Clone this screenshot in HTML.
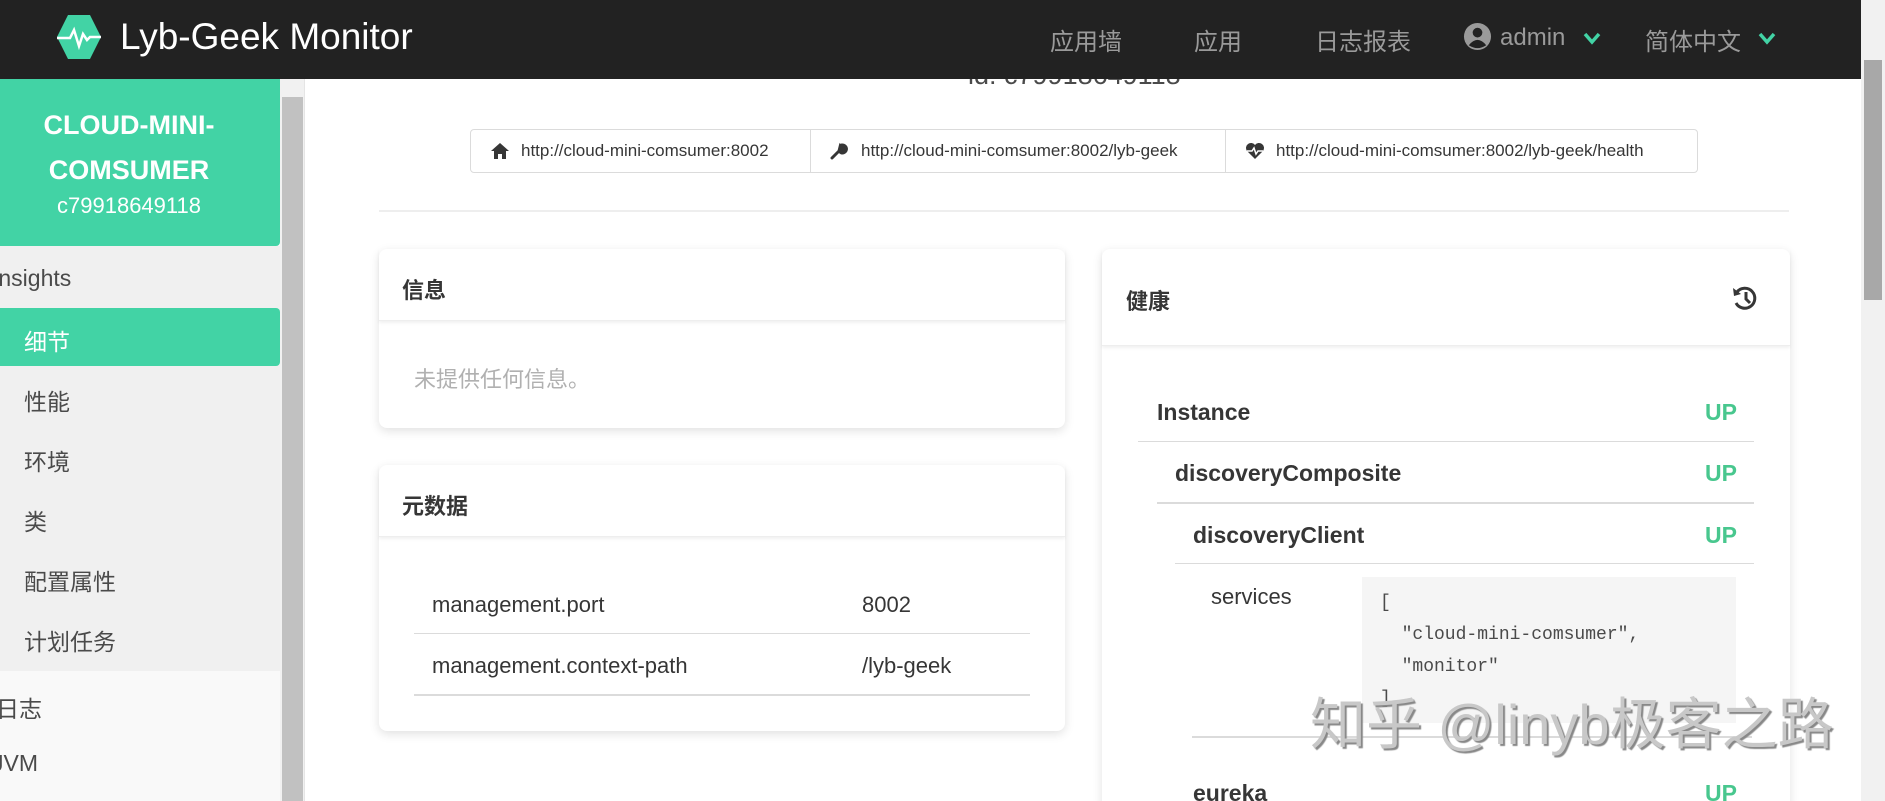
<!DOCTYPE html>
<html style="width:1885px;height:801px;overflow:hidden"><head><meta charset="utf-8"><style>
*{box-sizing:border-box;margin:0;padding:0}
body{width:1885px;height:801px;overflow:hidden;position:relative;background:#fff;font-family:"Liberation Sans","Noto Sans CJK SC",sans-serif;color:#363636}
.abs{position:absolute}
.hdr{left:0;top:0;width:1861px;height:79px;background:#222;z-index:5}
.z{z-index:6}
.nav{color:#9a9a9a;font-size:24px;top:22px}
.side{left:0;top:79px;width:280px;height:722px;background:#f9f9f9}
.menu{left:0;top:246px;width:280px;height:425px;background:#f0f0f0}
.mi{position:absolute;left:24px;font-size:23px;color:#4a4a4a}
.card{background:#fff;border-radius:8px;box-shadow:0 3px 10px rgba(0,0,0,.12)}
.ch{position:absolute;left:0;right:0;top:0;border-bottom:1px solid #eee;box-shadow:0 2px 3px rgba(0,0,0,.06)}
.ct{position:absolute;font-weight:bold;font-size:22px;color:#363636}
.url{top:129px;height:44px;border:1px solid #dbdbdb;background:#fff;font-size:17px;color:#363636;line-height:42px;padding-left:50px}
.row{font-size:22px;color:#363636}
.hl{height:1px;background:#dbdbdb}
.up{color:#48c78e;font-weight:bold;font-size:23px}
.hn{font-weight:bold;font-size:23px;color:#363636}
</style></head><body>
<div class="abs" style="left:968px;top:60px;font-size:27px;color:#4a4a4a">id: c79918649118</div>
<div class="abs hdr"></div>
<svg class="abs z" style="left:56px;top:14px" width="46" height="46" viewBox="0 0 46 46"><polygon points="12,1 34,1 45,23 34,45 12,45 1,23" fill="#42d3a5"/><polyline points="1,24 14,24 18,16 23,32 27,20 31,26 34,23 45,23" fill="none" stroke="#fff" stroke-width="2.5"/></svg>
<div class="abs z" style="left:120px;top:16px;color:#fff;font-size:37px">Lyb-Geek Monitor</div>
<div class="abs nav z" style="left:1050px">应用墙</div>
<div class="abs nav z" style="left:1194px">应用</div>
<div class="abs nav z" style="left:1315px">日志报表</div>
<svg class="abs z" style="left:1463px;top:22px" width="29" height="29" viewBox="0 0 30 30"><circle cx="15" cy="15" r="14" fill="#9a9a9a"/><circle cx="15" cy="11" r="5" fill="#222"/><path d="M6 24 Q15 13 24 24 Q15 30 6 24Z" fill="#222"/></svg>
<div class="abs nav z" style="left:1500px;top:24px">admin</div>
<svg class="abs z" style="left:1583px;top:32px" width="18" height="14"><polyline points="2,2 9,10 16,2" fill="none" stroke="#42d3a5" stroke-width="3.5"/></svg>
<div class="abs nav z" style="left:1645px">简体中文</div>
<svg class="abs z" style="left:1758px;top:32px" width="18" height="14"><polyline points="2,2 9,10 16,2" fill="none" stroke="#42d3a5" stroke-width="3.5"/></svg>
<div class="abs" style="left:1861px;top:0;width:24px;height:801px;background:#f1f1f1;z-index:7"></div>
<div class="abs" style="left:1864px;top:60px;width:18px;height:240px;background:#a8a8a8;z-index:8"></div>

<div class="abs side"></div>
<div class="abs" style="left:0;top:79px;width:280px;height:167px;background:#42d3a5;border-radius:0 0 4px 0"></div>
<div class="abs" style="left:0;top:103px;width:258px;text-align:center;color:#fff;font-size:27px;line-height:45px;font-weight:bold">CLOUD-MINI-<br>COMSUMER</div>
<div class="abs" style="left:0;top:193px;width:258px;text-align:center;color:#fff;font-size:22px">c79918649118</div>
<div class="abs menu"></div>
<div class="abs" style="left:-8px;top:265px;font-size:23px;color:#4a4a4a">Insights</div>
<div class="abs" style="left:0;top:308px;width:280px;height:58px;background:#42d3a5;border-radius:0 4px 4px 0"></div>
<div class="mi" style="top:323px;color:#fff">细节</div>
<div class="mi" style="top:383px">性能</div>
<div class="mi" style="top:443px">环境</div>
<div class="mi" style="top:503px">类</div>
<div class="mi" style="top:563px">配置属性</div>
<div class="mi" style="top:623px">计划任务</div>
<div class="mi" style="left:-4px;top:690px">日志</div>
<div class="mi" style="left:-8px;top:750px">JVM</div>
<div class="abs" style="left:280px;top:79px;width:25px;height:722px;background:#f1f1f1"></div>
<div class="abs" style="left:282px;top:97px;width:21px;height:704px;background:#c1c1c1"></div>
<div class="abs" style="left:304px;top:79px;width:1px;height:722px;background:#e5e5e5"></div>

<div class="abs url" style="left:470px;width:341px;border-radius:4px 0 0 4px">http://cloud-mini-comsumer:8002</div>
<svg class="abs" style="left:490px;top:142px" width="20" height="18" viewBox="0 0 20 18"><path d="M10 1 L19 9 L16 9 L16 17 L12 17 L12 12 L8 12 L8 17 L4 17 L4 9 L1 9Z" fill="#363636"/></svg>
<div class="abs url" style="left:810px;width:416px">http://cloud-mini-comsumer:8002/lyb-geek</div>
<svg class="abs" style="left:830px;top:142px" width="18" height="18" viewBox="0 0 18 18"><path d="M2 16 L9 9 M9 9 A4 4 0 1 0 12 3 L13 6 L11 7 L10 5Z" stroke="#363636" stroke-width="3" fill="#363636" stroke-linecap="round"/></svg>
<div class="abs url" style="left:1225px;width:473px;border-radius:0 4px 4px 0">http://cloud-mini-comsumer:8002/lyb-geek/health</div>
<svg class="abs" style="left:1245px;top:142px" width="20" height="18" viewBox="0 0 20 18"><path d="M10 17 L2 9 A4.5 4.5 0 0 1 10 3 A4.5 4.5 0 0 1 18 9Z" fill="#363636"/><polyline points="2,9 7,9 9,6 11,12 13,9 18,9" fill="none" stroke="#fff" stroke-width="1.5"/></svg>
<div class="abs" style="left:379px;top:210px;width:1410px;height:2px;background:#eee"></div>

<div class="abs card" style="left:379px;top:249px;width:686px;height:179px"><div class="ch" style="height:72px"></div><div class="ct" style="left:23px;top:24px">信息</div><div class="abs" style="left:35px;top:113px;font-size:22px;color:#b0b0b0">未提供任何信息。</div></div>

<div class="abs card" style="left:379px;top:465px;width:686px;height:266px"><div class="ch" style="height:72px"></div><div class="ct" style="left:23px;top:24px">元数据</div>
<div class="abs row" style="left:53px;top:127px">management.port</div><div class="abs row" style="left:483px;top:127px">8002</div>
<div class="abs hl" style="left:35px;top:168px;width:616px"></div>
<div class="abs row" style="left:53px;top:188px">management.context-path</div><div class="abs row" style="left:483px;top:188px">/lyb-geek</div>
<div class="abs hl" style="left:35px;top:229px;width:616px;height:2px"></div></div>

<div class="abs card" style="left:1102px;top:249px;width:688px;height:560px"><div class="ch" style="height:97px"></div><div class="ct" style="left:24px;top:35px">健康</div>
<svg class="abs" style="left:629px;top:35px" width="28" height="28" viewBox="0 0 28 28"><path d="M6 8 A10 10 0 1 1 5 19" fill="none" stroke="#363636" stroke-width="3"/><path d="M2 4 L3 12 L10 10Z" fill="#363636"/><path d="M15 8 L15 15 L19 19" fill="none" stroke="#363636" stroke-width="3"/></svg></div>
<div class="abs hn" style="left:1157px;top:399px">Instance</div><div class="abs up" style="left:1705px;top:399px">UP</div>
<div class="abs hl" style="left:1138px;top:441px;width:616px"></div>
<div class="abs hn" style="left:1175px;top:460px">discoveryComposite</div><div class="abs up" style="left:1705px;top:460px">UP</div>
<div class="abs hl" style="left:1157px;top:502px;width:597px;height:2px"></div>
<div class="abs hn" style="left:1193px;top:522px">discoveryClient</div><div class="abs up" style="left:1705px;top:522px">UP</div>
<div class="abs hl" style="left:1175px;top:563px;width:579px"></div>
<div class="abs row" style="left:1211px;top:584px">services</div>
<div class="abs" style="left:1362px;top:577px;width:374px;height:146px;background:#f5f5f5;font-family:'Liberation Mono',monospace;font-size:18px;color:#4a4a4a;line-height:32px;padding:10px 18px;white-space:pre">[
  "cloud-mini-comsumer",
  "monitor"
]</div>
<div class="abs hl" style="left:1192px;top:736px;width:560px;height:2px"></div>
<div class="abs hn" style="left:1193px;top:780px">eureka</div><div class="abs up" style="left:1705px;top:780px">UP</div>
<div class="abs" style="left:1310px;top:680px;font-size:56px;color:#c8c8c8;text-shadow:2px 2px 1px #888;white-space:nowrap">知乎 @linyb极客之路</div>
</body></html>
